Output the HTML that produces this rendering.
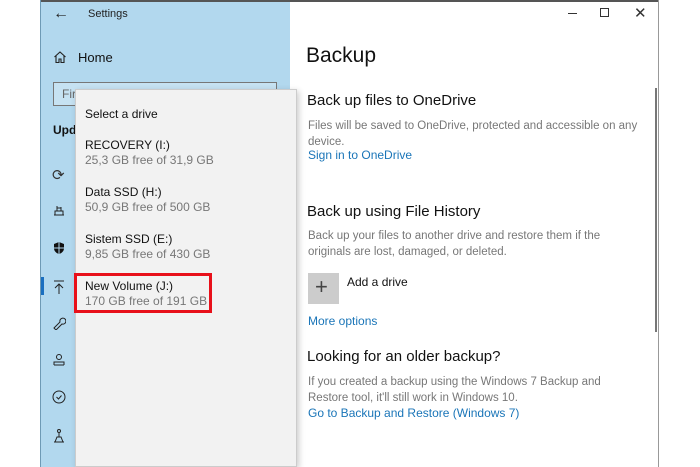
<!DOCTYPE html>
<html><head><meta charset="utf-8"><style>
*{margin:0;padding:0;box-sizing:border-box}
body{width:700px;height:467px;overflow:hidden;background:#fff;font-family:"Liberation Sans",sans-serif;position:relative}
.a{position:absolute;white-space:nowrap}
.g{color:#777}
.l{color:#1a75b8}
</style></head><body>
<div class="a" style="left:40px;top:0;width:619px;height:2px;background:#555"></div>
<div class="a" style="left:40px;top:0;width:1px;height:467px;background:#6e9ab5"></div>
<div class="a" style="left:658px;top:0;width:1px;height:467px;background:#999"></div>
<div class="a" style="left:41px;top:2px;width:249px;height:465px;background:#b2d8ee"></div>
<div class="a" style="left:53px;top:5px;font-size:16px;color:#222">&#8592;</div>
<div class="a" style="left:88px;top:8px;font-size:11px;color:#222">Settings</div>
<svg class="a" style="left:53px;top:50px" width="14" height="14" viewBox="0 0 14 14" fill="none" stroke="#222" stroke-width="1.1"><path d="M1.5 7L7 2l5.5 5M3 6v6.5h3V9h2v3.5h3V6"/></svg>
<div class="a" style="left:78px;top:50px;font-size:13px;color:#111">Home</div>
<div class="a" style="left:53px;top:82px;width:224px;height:24px;border:1px solid #777;background:#c6e2f2"></div>
<div class="a" style="left:62px;top:87px;font-size:12px;color:#666">Fir</div>
<div class="a" style="left:53px;top:123px;font-size:12px;font-weight:bold;color:#111">Upd</div>
<div class="a" style="left:52px;top:166px;font-size:15px;color:#333">&#10227;</div>
<svg class="a" style="left:52px;top:203px" width="14" height="14" viewBox="0 0 14 14" fill="none" stroke="#222"><path d="M2 12h10M3 12V8h8v4M5 8V3M9 8V4M5 5h4"/></svg>
<svg class="a" style="left:52px;top:241px" width="14" height="14" viewBox="0 0 14 14"><path d="M7 1l5 2v4c0 3-2 5-5 6-3-1-5-3-5-6V3z" fill="#111"/><path d="M7 1v12M2 7h10" stroke="#b2d8ee" stroke-width="1"/></svg>
<div class="a" style="left:41px;top:277px;width:3px;height:18px;background:#1a6fc0"></div>
<svg class="a" style="left:52px;top:279px" width="14" height="16" viewBox="0 0 14 16" fill="none" stroke="#222"><path d="M2 2h10M7 15V5M3 9l4-4 4 4"/></svg>
<svg class="a" style="left:52px;top:316px" width="14" height="14" viewBox="0 0 14 14" fill="none" stroke="#222"><path d="M2 12l6-6a3 3 0 1 1 2 2l-6 6z"/></svg>
<svg class="a" style="left:52px;top:353px" width="14" height="14" viewBox="0 0 14 14" fill="none" stroke="#222"><circle cx="7" cy="4" r="2.5"/><path d="M2 12h10M2 12V9h10v3"/></svg>
<svg class="a" style="left:52px;top:390px" width="14" height="14" viewBox="0 0 14 14" fill="none" stroke="#222"><circle cx="7" cy="7" r="6"/><path d="M4.5 7l2 2 3-3.5"/></svg>
<svg class="a" style="left:52px;top:428px" width="14" height="16" viewBox="0 0 14 16" fill="none" stroke="#222"><circle cx="7" cy="3" r="1.5"/><path d="M7 5v4M3 14l2-5h4l2 5M2 14h10"/></svg>

<div class="a" style="left:75px;top:89px;width:222px;height:378px;background:#f2f2f2;border:1px solid #ccc;box-shadow:2px 2px 6px rgba(0,0,0,.2)"></div>
<div class="a" style="left:85px;top:107px;font-size:12px;color:#111">Select a drive</div>
<div class="a" style="left:85px;top:138px;font-size:12px;color:#111">RECOVERY (I:)</div>
<div class="a" style="left:85px;top:153px;font-size:12px" class="g"><span class="g">25,3 GB free of 31,9 GB</span></div>
<div class="a" style="left:85px;top:185px;font-size:12px;color:#111">Data SSD (H:)</div>
<div class="a" style="left:85px;top:200px;font-size:12px"><span class="g">50,9 GB free of 500 GB</span></div>
<div class="a" style="left:85px;top:232px;font-size:12px;color:#111">Sistem SSD (E:)</div>
<div class="a" style="left:85px;top:247px;font-size:12px"><span class="g">9,85 GB free of 430 GB</span></div>
<div class="a" style="left:74px;top:273px;width:138px;height:40px;border:3px solid #e8101a"></div>
<div class="a" style="left:85px;top:279px;font-size:12px;color:#111">New Volume (J:)</div>
<div class="a" style="left:85px;top:294px;font-size:12px"><span class="g">170 GB free of 191 GB</span></div>

<div class="a" style="left:568px;top:13px;width:9px;height:1px;background:#333"></div>
<div class="a" style="left:600px;top:8px;width:9px;height:9px;border:1px solid #333"></div>
<div class="a" style="left:634px;top:4px;font-size:15px;color:#333">&#10005;</div>
<div class="a" style="left:655px;top:88px;width:2px;height:244px;background:#777"></div>

<div class="a" style="left:306px;top:44px;font-size:21px;color:#111">Backup</div>
<div class="a" style="left:307px;top:92px;font-size:15px;color:#111">Back up files to OneDrive</div>
<div class="a" style="left:308px;top:118px;font-size:11.5px;line-height:16px"><span class="g">Files will be saved to OneDrive, protected and accessible on any<br>device.</span></div>
<div class="a l" style="left:308px;top:148px;font-size:12px">Sign in to OneDrive</div>
<div class="a" style="left:307px;top:203px;font-size:15px;color:#111">Back up using File History</div>
<div class="a" style="left:308px;top:228px;font-size:11.5px;line-height:16px"><span class="g">Back up your files to another drive and restore them if the<br>originals are lost, damaged, or deleted.</span></div>
<div class="a" style="left:308px;top:273px;width:31px;height:31px;background:#ccc"></div>
<div class="a" style="left:315px;top:274px;font-size:22px;color:#444;font-weight:300">+</div>
<div class="a" style="left:347px;top:275px;font-size:12px;color:#111">Add a drive</div>
<div class="a l" style="left:308px;top:314px;font-size:12px">More options</div>
<div class="a" style="left:307px;top:348px;font-size:15px;color:#111">Looking for an older backup?</div>
<div class="a" style="left:308px;top:374px;font-size:11.5px;line-height:16px"><span class="g">If you created a backup using the Windows 7 Backup and<br>Restore tool, it'll still work in Windows 10.</span></div>
<div class="a l" style="left:308px;top:406px;font-size:12px">Go to Backup and Restore (Windows 7)</div>
</body></html>
